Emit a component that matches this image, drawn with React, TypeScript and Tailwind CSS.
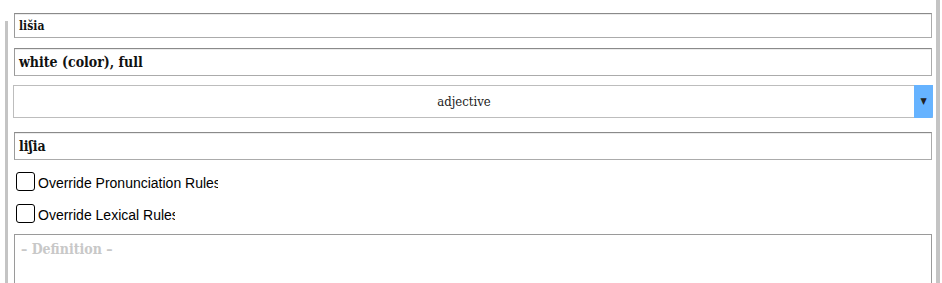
import React from 'react';

const serif = "font-['DejaVu_Serif_Condensed','DejaVu_Serif',serif] font-stretch-condensed";
const inputBox =
  'shrink-0 w-full border border-[#ababab] border-t-[#8a8a8a] border-l-[#9a9a9a] shadow-[inset_0_1px_0_#ececec] bg-white px-[4px] flex items-center text-[#111] font-bold';

const checks = [
  { label: 'Override Pronunciation Rules', width: 'w-[180px]' },
  { label: 'Override Lexical Rules', width: 'w-[137px]' },
];

export default function App() {
  return (
    <div className="w-[942px] h-[283px] overflow-hidden bg-white flex">
      <div className="ml-[5px] mt-[21px] w-[3px] bg-[#c4c4c4] shrink-0" />
      <div className={`ml-[6px] w-[918px] pt-[13px] flex flex-col ${serif}`}>
        <div className={`${inputBox} h-[25px] text-[12px]`}>lišia</div>
        <div className={`${inputBox} h-[28px] mt-[10px] text-[14px]`}>white (color), full</div>
        <div className="shrink-0 -mx-px mt-[9px] h-[33px] flex border border-[#bdbdbd] bg-white">
          <div className="flex-1 flex items-center justify-center text-[13px] text-[#222] font-normal">
            adjective
          </div>
          <div className="w-[19px] -my-px -mr-px bg-[#66b3ff] rounded-br-[2px] flex items-center justify-center text-[9px] text-[#222]">
            ▼
          </div>
        </div>
        <div className={`${inputBox} h-[28px] mt-[14px] text-[14px]`}>liʃia</div>
        <div className="shrink-0 mt-[12px] flex flex-col gap-[13px] font-['Liberation_Sans',Arial,sans-serif] font-normal">
          {checks.map((c) => (
            <div key={c.label} className="flex items-center h-[19px] ml-[2px]">
              <div className="w-[19px] h-[19px] border border-black rounded-[3px] bg-white shrink-0" />
              <div className={`${c.width} ml-[3px] overflow-hidden whitespace-nowrap text-[14px] text-black leading-[19px] pt-[4px]`}>
                {c.label}
              </div>
            </div>
          ))}
        </div>
        <div className="mt-[11px] h-[70px] border border-[#9a9a9a] bg-white px-[6px] pt-[4px] text-[14px] font-bold text-[#c8c8c8] shrink-0">
          – Definition –
        </div>
      </div>
      <div className="ml-[4px] w-[4px] bg-[#c4c4c4] shrink-0" />
    </div>
  );
}
